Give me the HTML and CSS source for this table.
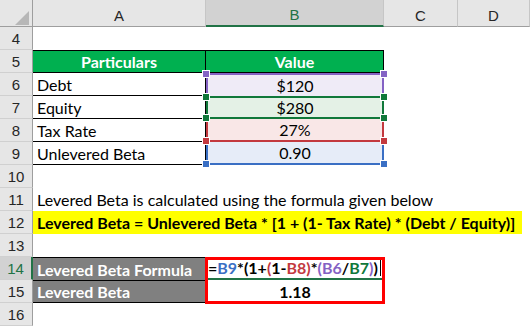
FILE: index.html
```html
<!DOCTYPE html>
<html>
<head>
<meta charset="utf-8">
<link rel="stylesheet" href="styles.css">
</head>
<body>
<div class="sheet">
  <div class="corner"><svg width="32" height="27" viewBox="0 0 32 27"><polygon points="15,25 29,11 29,25" fill="#b7b7b7"/></svg></div>
  <div class="ch">A</div>
  <div class="ch sel">B</div>
  <div class="ch">C</div>
  <div class="ch">D</div>

  <div class="rh">4</div><div class="c"></div><div class="c"></div><div class="c"></div><div class="c"></div>

  <div class="rh">5</div>
  <div class="c th tha">Particulars</div>
  <div class="c th thb">Value</div>
  <div class="c"></div><div class="c"></div>

  <div class="rh">6</div>
  <div class="c la">Debt</div>
  <div class="c rb r6"><span class="h tl"></span><span class="h tr"></span>$120</div>
  <div class="c"></div><div class="c"></div>

  <div class="rh">7</div>
  <div class="c la">Equity</div>
  <div class="c rb r7"><span class="h tl"></span><span class="h tr"></span><span class="h bl"></span><span class="h br"></span>$280</div>
  <div class="c"></div><div class="c"></div>

  <div class="rh">8</div>
  <div class="c la">Tax Rate</div>
  <div class="c rb r8"><span class="h bl"></span><span class="h br"></span>27%</div>
  <div class="c"></div><div class="c"></div>

  <div class="rh">9</div>
  <div class="c la">Unlevered Beta</div>
  <div class="c rb r9"><span class="h bl"></span><span class="h br"></span>0.90</div>
  <div class="c"></div><div class="c"></div>

  <div class="rh">10</div><div class="c"></div><div class="c"></div><div class="c"></div><div class="c"></div>

  <div class="rh">11</div>
  <div class="c wide">Levered Beta is calculated using the formula given below</div>

  <div class="rh">12</div>
  <div class="c wide"><div class="yellow">Levered Beta = Unlevered Beta * [1 + (1- Tax Rate) * (Debt / Equity)]</div></div>

  <div class="rh">13</div><div class="c"></div><div class="c"></div><div class="c"></div><div class="c"></div>

  <div class="rh sel">14</div>
  <div class="c gray g14">Levered Beta Formula</div>
  <div class="c formula"><span class="k">=</span><span class="fb">B9</span><span class="k">*(1+</span><span class="fr">(</span><span class="k">1-</span><span class="fr">B8)</span><span class="k">*</span><span class="fp">(B6</span><span class="k">/</span><span class="fg">B7</span><span class="fp">)</span><span class="k">)</span><span class="cursor"></span><span class="redbox"></span></div>
  <div class="c"></div><div class="c"></div>

  <div class="rh">15</div>
  <div class="c gray g15">Levered Beta</div>
  <div class="c result">1.18</div>
  <div class="c"></div><div class="c"></div>

  <div class="rh">16</div><div class="c"></div><div class="c"></div><div class="c"></div><div class="c"></div>
</div>
</body>
</html>
```

FILE: styles.css
```css
html, body {
  margin: 0;
  padding: 0;
  background: #ffffff;
}

body {
  font-family: "Lato", "Liberation Sans", sans-serif;
  font-size: 16px;
  color: #000;
  overflow: hidden;
}

.sheet {
  display: grid;
  grid-template-columns: 33px 173px 178px 74px 72px;
  grid-template-rows: 27px repeat(13, 23px);
  width: 530px;
}

.corner {
  background: #e6e6e6;
  border-right: 1px solid #9e9e9e;
  border-bottom: 1px solid #9e9e9e;
  box-sizing: border-box;
}
.corner svg { display: block; }

.ch {
  background: #e6e6e6;
  border-bottom: 1px solid #9e9e9e;
  border-right: 1px solid #c6c6c6;
  box-sizing: border-box;
  display: flex;
  align-items: center;
  justify-content: center;
  padding-top: 4px;
  color: #262626;
  font-family: "Liberation Sans", sans-serif;
  font-size: 15px;
}
.ch.sel {
  background: #d2d2d2;
  color: #217346;
  border-bottom: 2px solid #217346;
}

.rh {
  background: #e6e6e6;
  border-right: 1px solid #9e9e9e;
  border-bottom: 1px solid #d0d0d0;
  box-sizing: border-box;
  display: flex;
  align-items: center;
  justify-content: center;
  color: #262626;
  font-family: "Liberation Sans", sans-serif;
  font-size: 15px;
}
.rh.sel {
  background: #d2d2d2;
  color: #217346;
  border-right: 2px solid #217346;
}

.c {
  box-sizing: border-box;
  display: flex;
  align-items: center;
  white-space: nowrap;
  position: relative;
  min-width: 0;
}

.th {
  background: #00b050;
  color: #fff;
  font-weight: bold;
  justify-content: center;
  border-top: 1px solid #000;
  border-bottom: 1px solid #000;
}
.tha { border-right: 1px solid #000; }
.thb { border-right: 1px solid #000; }

.la {
  padding-left: 4px;
  border-bottom: 1px solid #000;
  border-right: 1px solid #000;
}

.rb {
  justify-content: center;
  border-left: 2px solid;
  border-right: 2px solid;
}
.r6 { background: #efebf7; border-color: #8462c4; border-top: 2px solid #8462c4; }
.r7 { background: #e4f1e6; border-color: #10783a; border-top: 2px solid #10783a; border-bottom: 2px solid #10783a; }
.r8 { background: #f9e7e7; border-color: #c3393f; border-bottom: 2px solid #c3393f; }
.r9 { background: #e6ecf8; border-color: #3a6fc4; border-bottom: 2px solid #3a6fc4; }

.h {
  position: absolute;
  width: 6px;
  height: 6px;
  border: 1px solid #fff;
  z-index: 3;
}
.r6 .h { background: #8462c4; }
.r7 .h { background: #10783a; }
.r8 .h { background: #c3393f; }
.r9 .h { background: #3a6fc4; }
.tl { top: -5px; left: -6px; }
.tr { top: -5px; right: -6px; }
.bl { bottom: -5px; left: -6px; }
.br { bottom: -5px; right: -6px; }
.r7 { z-index: 2; }
.r6 { z-index: 1; }

.wide {
  grid-column: 2 / 6;
  padding-left: 4px;
}
.wide .yellow {
  background: #ffff00;
  font-weight: bold;
  height: 23px;
  display: flex;
  align-items: center;
  margin-left: -4px;
  padding-left: 4px;
  width: 485px;
}

.gray {
  background: #808080;
  color: #fff;
  font-weight: bold;
  padding-left: 4px;
  border-top: 1px solid #000;
  border-right: 1px solid #000;
}
.g15 { border-bottom: 1px solid #000; }

.formula {
  font-weight: bold;
  padding-left: 2px;
  border-bottom: 2px solid #217346;
  z-index: 4;
}
.k { color: #000; }
.fb { color: #3a6fc4; }
.fr { color: #c3393f; }
.fp { color: #8462c4; }
.fg { color: #10783a; }
.cursor {
  display: inline-block;
  width: 1px;
  height: 17px;
  background: #000;
  margin-left: 2px;
}

.result {
  font-weight: bold;
  justify-content: center;
}

.redbox {
  position: absolute;
  top: 0;
  left: -1px;
  width: 180px;
  height: 47px;
  box-sizing: border-box;
  border: 3px solid #ff0000;
  pointer-events: none;
}
```
